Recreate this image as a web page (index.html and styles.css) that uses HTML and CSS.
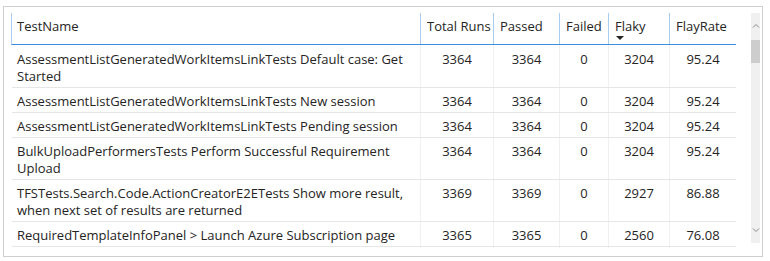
FILE: index.html
```html
<!DOCTYPE html>
<html>
<head>
<meta charset="utf-8">
<link rel="stylesheet" href="styles.css">
</head>
<body>
<div class="visual">
  <div class="table">
    <div class="head">
      <div class="hc first">TestName</div>
      <div class="hc">Total Runs</div>
      <div class="hc">Passed</div>
      <div class="hc">Failed</div>
      <div class="hc sorted">Flaky<span class="arrow"></span></div>
      <div class="hc">FlayRate</div>
    </div>
    <div class="body">
      <div class="row">
        <div class="c name">AssessmentListGeneratedWorkItemsLinkTests Default case: Get Started</div>
        <div class="c">3364</div><div class="c">3364</div><div class="c">0</div><div class="c">3204</div><div class="c">95.24</div>
      </div>
      <div class="row">
        <div class="c name">AssessmentListGeneratedWorkItemsLinkTests New session</div>
        <div class="c">3364</div><div class="c">3364</div><div class="c">0</div><div class="c">3204</div><div class="c">95.24</div>
      </div>
      <div class="row">
        <div class="c name">AssessmentListGeneratedWorkItemsLinkTests Pending session</div>
        <div class="c">3364</div><div class="c">3364</div><div class="c">0</div><div class="c">3204</div><div class="c">95.24</div>
      </div>
      <div class="row">
        <div class="c name">BulkUploadPerformersTests Perform Successful Requirement Upload</div>
        <div class="c">3364</div><div class="c">3364</div><div class="c">0</div><div class="c">3204</div><div class="c">95.24</div>
      </div>
      <div class="row">
        <div class="c name">TFSTests.Search.Code.ActionCreatorE2ETests Show more result, when next set of results are returned</div>
        <div class="c">3369</div><div class="c">3369</div><div class="c">0</div><div class="c">2927</div><div class="c">86.88</div>
      </div>
      <div class="row">
        <div class="c name">RequiredTemplateInfoPanel &gt; Launch Azure Subscription page</div>
        <div class="c">3365</div><div class="c">3365</div><div class="c">0</div><div class="c">2560</div><div class="c">76.08</div>
      </div>
      <div class="row">
        <div class="c name">&nbsp;</div>
        <div class="c">&nbsp;</div><div class="c"></div><div class="c"></div><div class="c"></div><div class="c"></div>
      </div>
    </div>
  </div>
  <div class="scroll">
    <svg class="chev" width="8" height="6" viewBox="0 0 8 6"><path d="M1 4.5 L4 1.5 L7 4.5" fill="none" stroke="#8a8a8a" stroke-width="1"/></svg>
    <div class="track"><div class="thumb"></div></div>
    <svg class="chev" width="8" height="6" viewBox="0 0 8 6"><path d="M1 1.5 L4 4.5 L7 1.5" fill="none" stroke="#8a8a8a" stroke-width="1"/></svg>
  </div>
</div>
</body>
</html>
```
FILE: styles.css
```css
html, body {
  margin: 0;
  padding: 0;
  background: #fff;
}
body {
  padding: 6px 5px 0 3px;
  font-family: "Open Sans", "Noto Sans", sans-serif;
  font-size: 13px;
  color: #252423;
}
.visual {
  width: 760px;
  height: 251px;
  box-sizing: border-box;
  border: 1px solid #cfcfcf;
  padding: 6px 0 0 7px;
  display: flex;
  gap: 15px;
}
.table {
  width: 725px;
  display: flex;
  flex-direction: column;
}
.head, .row {
  display: grid;
  grid-template-columns: 408px 73px 66px 49px 61px 67px;
}
.head {
  height: 31px;
  border-bottom: 1px solid #3c8ee0;
  border-left: 1px solid #a9cdf2;
}
.hc {
  border-left: 1px solid #a9cdf2;
  padding: 5px 0 0 6px;
  line-height: 17px;
  white-space: nowrap;
  position: relative;
}
.hc.first {
  border-left: none;
  padding-left: 5px;
}
.arrow {
  position: absolute;
  left: 7px;
  top: 23px;
  width: 0;
  height: 0;
  border-left: 4px solid transparent;
  border-right: 4px solid transparent;
  border-top: 4px solid #252423;
}
.body {
  height: 203px;
  overflow: hidden;
  border-left: 1px solid transparent;
}
.row {
  border-bottom: 1px solid #e6e6e6;
}
.row:first-child .c {
  padding-top: 6px;
}
.c {
  text-align: center;
  line-height: 17px;
  padding: 5px 0 2px;
  border-left: 1px solid #f0f0f0;
  color: #252423;
}
.c.name {
  text-align: left;
  border-left: none;
  padding-left: 5px;
  padding-right: 6px;
}
.scroll {
  width: 9px;
  height: 230px;
  background: #f0f0f0;
  display: flex;
  flex-direction: column;
  align-items: center;
}
.chev {
  display: block;
  margin: 10px 0 6px;
}
.scroll .chev:last-child {
  margin: 0 0 10px;
}
.track {
  flex: 1;
  width: 100%;
  margin-top: 5px;
}
.thumb {
  height: 23px;
  background: #cdcdcd;
}
```
